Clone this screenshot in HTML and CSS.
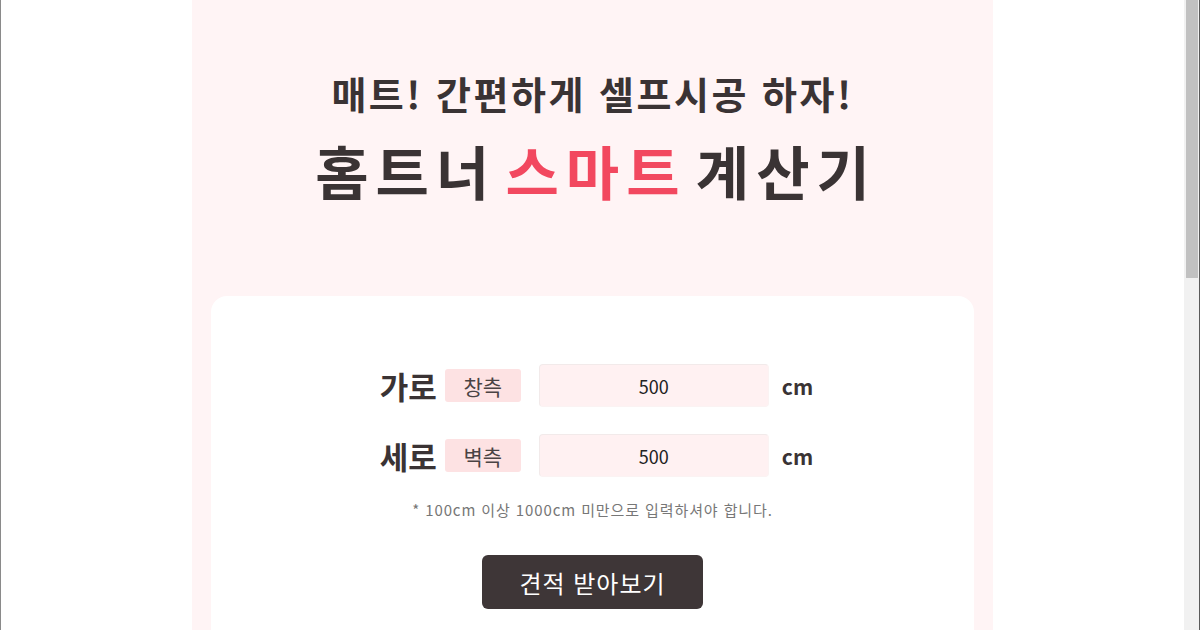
FILE: index.html
```html
<!DOCTYPE html>
<html lang="ko">
<head>
<meta charset="utf-8">
<title>홈트너 스마트 계산기</title>
<link rel="stylesheet" href="styles.css">
</head>
<body>
<div class="window">
  <div class="viewport">
    <main class="column">
      <header class="hero">
        <p class="sub">매트! 간편하게 셀프시공 하자!</p>
        <h1 class="title">홈트너 <span class="accent">스마트</span> 계산기</h1>
      </header>
      <section class="card">
        <div class="row">
          <span class="label">가로</span>
          <span class="badge">창측</span>
          <input class="field" type="text" value="500">
          <span class="unit">cm</span>
        </div>
        <div class="row">
          <span class="label">세로</span>
          <span class="badge">벽측</span>
          <input class="field" type="text" value="500">
          <span class="unit">cm</span>
        </div>
        <p class="note">* 100cm 이상 1000cm 미만으로 입력하셔야 합니다.</p>
        <button class="cta" type="button">견적 받아보기</button>
      </section>
    </main>
  </div>
  <div class="scrollbar"><div class="thumb"></div></div>
</div>
</body>
</html>
```
FILE: styles.css
```css
* { box-sizing: border-box; }
html, body {
  margin: 0;
  padding: 0;
  height: 630px;
  overflow: hidden;
  background: #ffffff;
  font-family: "Noto Sans CJK KR", "Noto Sans", sans-serif;
  color: #3a3334;
}
.window {
  display: flex;
  height: 630px;
  border-left: 1px solid #8a8a8a;
  border-right: 1px solid #5a5a5a;
}
.viewport {
  flex: 1;
  display: flex;
  justify-content: center;
  overflow: hidden;
}
.scrollbar {
  width: 15px;
  background: #f1f1f1;
  padding: 0 1px 0 2px;
}
.thumb {
  height: 278px;
  background: #c1c1c1;
}
.column {
  width: 801px;
  background: #fff4f5;
  padding: 71px 19px 0 19px;
  display: flex;
  flex-direction: column;
}
.hero {
  text-align: center;
}
.sub {
  margin: 0;
  font-size: 38px;
  line-height: 44px;
  font-weight: 700;
  letter-spacing: 2.5px;
  color: #3a3334;
}
.title {
  margin: 20px 0 0 0;
  padding-left: 7px;
  font-size: 58px;
  line-height: 70px;
  font-weight: 700;
  letter-spacing: 7px;
  word-spacing: -14px;
  color: #3a3334;
}
.accent {
  color: #f2485f;
}
.card {
  margin-top: 91px;
  background: #ffffff;
  border-radius: 16px;
  padding: 68px 0 40px 0;
  display: flex;
  flex-direction: column;
  align-items: center;
  flex: 1;
}
.row {
  display: flex;
  align-items: center;
  height: 43px;
  margin-bottom: 27px;
  padding-left: 8px;
}
.label {
  font-size: 31px;
  font-weight: 700;
  color: #3a3334;
  margin-right: 8px;
  line-height: 1;
}
.badge {
  width: 76px;
  height: 33px;
  background: #fde2e3;
  border-radius: 3px;
  display: flex;
  align-items: center;
  justify-content: center;
  font-size: 21px;
  color: #4a4344;
  margin-right: 18px;
}
.field {
  width: 230px;
  height: 43px;
  border: 1px solid #f2eaea;
  border-bottom-color: #fbf3f3;
  border-right-color: #fbf3f3;
  border-radius: 4px;
  background: #fff1f2;
  text-align: center;
  font-family: "Noto Sans CJK KR", "Noto Sans", sans-serif;
  font-size: 18px;
  color: #222222;
  padding: 0;
  margin-right: 13px;
}
.unit {
  font-size: 21px;
  font-weight: 700;
  color: #3a3334;
}
.note {
  margin: -4px 0 0 0;
  font-size: 15px;
  line-height: 20px;
  letter-spacing: 0.9px;
  color: #777777;
}
.cta {
  margin-top: 35px;
  width: 221px;
  height: 54px;
  border: none;
  border-radius: 6px;
  background: #3e3637;
  color: #ffffff;
  font-family: "Noto Sans CJK KR", "Noto Sans", sans-serif;
  font-size: 24px;
  font-weight: 400;
  letter-spacing: 1px;
}
```
